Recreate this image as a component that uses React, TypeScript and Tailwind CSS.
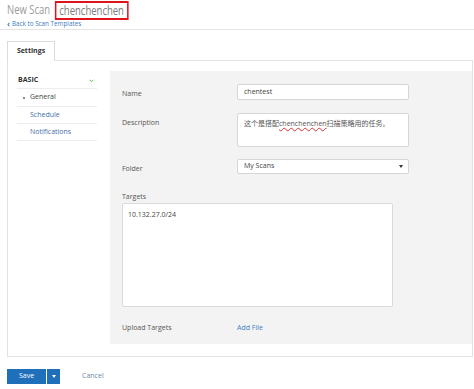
import React from 'react'

const labelCls = 'w-[115px] shrink-0 text-[7px] leading-[10px] text-[#555] pt-[5px]'
const inputCls = 'w-[172px] bg-white border border-[#d6d6d6] rounded-[2px] text-[7px] text-[#444] px-[6px]'

export default function App() {
  return (
    <div className="w-[474px] h-[389px] bg-white overflow-hidden font-['Open_Sans','Noto_Sans_CJK_SC',sans-serif] text-[#555]">
      {/* header */}
      <div className="h-[30px] border-b border-[#e4e4e4] pl-[7px]">
        <div className="flex items-center h-[20px] origin-left scale-x-[0.76]">
          <span className="text-[12.5px] leading-[16px] text-[#9a9a9a]">New Scan</span>
          <span className="ml-[6px] mt-[1px] h-[19px] border-2 border-[#e0121c] px-[4px] text-[12.5px] leading-[15px] text-[#7a7a7a]">
            chenchenchen
          </span>
        </div>
        <div className="flex items-center gap-[2px] text-[6.3px] leading-[8px] text-[#3f7dc0]">
          <span className="text-[8px] font-bold">‹</span>
          <span>Back to Scan Templates</span>
        </div>
      </div>

      {/* tab */}
      <div className="pl-[7px] pt-[11px]">
        <div className="relative z-10 -mb-px w-[48px] h-[20px] bg-white border border-b-0 border-[#dcdcdc] flex items-center justify-center text-[7px] font-bold text-[#333]">
          Settings
        </div>
      </div>

      {/* panel */}
      <div className="ml-[7px] w-[466px] h-[297px] border border-[#e2e2e2] flex">
        {/* sidebar */}
        <div className="w-[102px] shrink-0 pl-[9px] pr-[4px] pt-[11px]">
          <div className="w-[80px] text-[7px]">
            <div className="h-[17px] border-b border-[#ededed] flex items-center justify-between pl-[1px] pr-[3px]">
              <span className="font-bold text-[#333]">BASIC</span>
              <svg width="5" height="4" viewBox="0 0 5 4" className="mt-[1px]">
                <path d="M0.6 0.8 L2.5 2.8 L4.4 0.8" fill="none" stroke="#5cb85c" strokeWidth="1" />
              </svg>
            </div>
            <div className="h-[18px] border-b border-[#ededed] flex items-center pl-[6px] text-[#444]">
              <span className="w-[2px] h-[2px] rounded-full bg-[#666] mr-[5px]" />
              General
            </div>
            <div className="h-[17px] border-b border-[#ededed] flex items-center pl-[13px] text-[#3f6fa8]">Schedule</div>
            <div className="h-[17px] border-b border-[#ededed] flex items-center pl-[13px] text-[#3f6fa8]">Notifications</div>
          </div>
        </div>

        {/* content */}
        <div className="flex-1 mt-[10px] mb-[12px] bg-[#f3f3f3] pl-[12px] pt-[13px]">
          <div className="flex">
            <div className={labelCls}>Name</div>
            <div className={inputCls + ' h-[16px] flex items-center'}>chentest</div>
          </div>
          <div className="flex mt-[13px]">
            <div className={labelCls}>Description</div>
            <div className={inputCls + ' h-[34px] pt-[5px] leading-[10px] text-[#555]'}>
              这个是搭配<span className="underline decoration-wavy decoration-[#e03030] decoration-[0.5px]">chenchenchen</span>扫描策略用的任务。
            </div>
          </div>
          <div className="flex mt-[12px]">
            <div className={labelCls + ' pt-[4px]'}>Folder</div>
            <div className={inputCls + ' h-[15px] flex items-center justify-between pr-[5px]'}>
              <span>My Scans</span>
              <span className="w-0 h-0 border-l-[2.5px] border-r-[2.5px] border-t-[3px] border-l-transparent border-r-transparent border-t-[#333]" />
            </div>
          </div>
          <div className="mt-[18px] text-[7px] leading-[10px] text-[#555]">Targets</div>
          <div className="mt-[1px] w-[271px] h-[104px] bg-white border-[1.5px] border-[#dadada] rounded-[2px] px-[5px] pt-[6px] text-[7px] leading-[10px] text-[#444]">
            10.132.27.0/24
          </div>
          <div className="flex mt-[16px] text-[7px] leading-[10px]">
            <div className="w-[115px] text-[#555]">Upload Targets</div>
            <div className="text-[#3f7dc0]">Add File</div>
          </div>
        </div>
      </div>

      {/* footer */}
      <div className="flex items-center pl-[7px] mt-[12px]">
        <div className="flex h-[15px]">
          <div className="w-[39px] bg-[#1f6fba] flex items-center justify-center text-[7px] text-white">Save</div>
          <div className="ml-px w-[13px] bg-[#1f6fba] flex items-center justify-center">
            <span className="w-0 h-0 border-l-[2.5px] border-r-[2.5px] border-t-[3px] border-l-transparent border-r-transparent border-t-white" />
          </div>
        </div>
        <div className="ml-[22px] text-[7px] text-[#6f88a6]">Cancel</div>
      </div>
    </div>
  )
}
